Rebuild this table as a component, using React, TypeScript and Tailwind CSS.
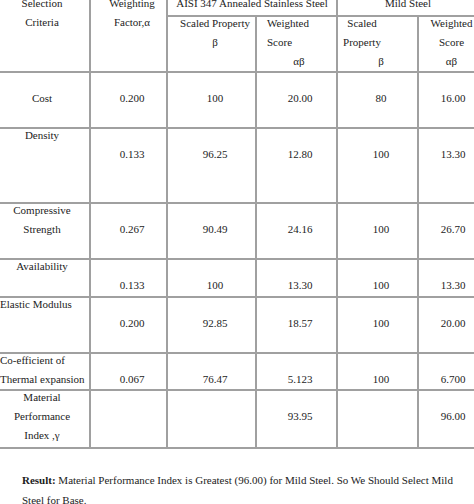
import React from "react";

const line = "border-[#a0a0a0]";

type Row = {
  label: string[];
  labelClass?: string;
  values: string[];
};

const rows: Row[] = [
  { label: ["", "Cost"], values: ["0.200", "100", "20.00", "80", "16.00"] },
  { label: ["Density"], values: ["0.133", "96.25", "12.80", "100", "13.30"] },
  { label: ["Compressive", "Strength"], values: ["0.267", "90.49", "24.16", "100", "26.70"] },
  { label: ["Availability"], values: ["0.133", "100", "13.30", "100", "13.30"] },
  { label: ["Elastic Modulus"], labelClass: "text-left pl-[12px]", values: ["0.200", "92.85", "18.57", "100", "20.00"] },
  {
    label: ["Co-efficient of", "Thermal expansion"],
    labelClass: "text-left pl-[12px] whitespace-nowrap",
    values: ["0.067", "76.47", "5.123", "100", "6.700"],
  },
  { label: ["Material", "Performance", "Index ,γ"], values: ["", "", "93.95", "", "96.00"] },
];

function Lines({ items, className = "" }: { items: string[]; className?: string }) {
  return (
    <div className={`-mt-[3px] ${className}`}>
      {items.map((t, i) => (
        <div key={i} className="h-[19px]">
          {t}
        </div>
      ))}
    </div>
  );
}

export default function App() {
  return (
    <div
      className="w-[474px] h-[504px] overflow-hidden bg-white text-[#1c1c1c] text-[11px] leading-[19px]"
      style={{ fontFamily: '"Liberation Serif", "Times New Roman", serif' }}
    >
      <div className="-mt-[6px] -ml-[12px] grid grid-cols-[103px_77px_89px_81px_81px_63px] grid-rows-[23px_56px_56px_75px_56px_38px_56px_37px_58px]">
        {/* header */}
        <div className={`row-span-2 border-r-2 border-b-2 ${line} text-center pl-[7px]`}>
          <div>Selection</div>
          <div>Criteria</div>
        </div>
        <div className={`row-span-2 border-r-2 border-b-2 ${line} text-center pl-[7px]`}>
          <div>Weighting</div>
          <div>Factor,α</div>
        </div>
        <div className={`col-span-2 border-r-2 border-b-2 ${line} text-center whitespace-nowrap`}>
          AISI 347 Annealed Stainless Steel
        </div>
        <div className={`col-span-2 border-b-2 ${line} text-center pr-[4px]`}>Mild Steel</div>

        <div className={`border-r-2 border-b-2 ${line}`}>
          <Lines items={["Scaled Property", "β"]} className="text-center pl-[7px] whitespace-nowrap" />
        </div>
        <div className={`border-r-2 border-b-2 ${line}`}>
          <div className="-mt-[3px]">
            <div className="h-[19px] pl-[10px]">Weighted</div>
            <div className="h-[19px] pl-[10px]">Score</div>
            <div className="h-[19px] text-center pl-[5px]">αβ</div>
          </div>
        </div>
        <div className={`border-r-2 border-b-2 ${line}`}>
          <div className="-mt-[3px]">
            <div className="h-[19px] text-center pr-[31px]">Scaled</div>
            <div className="h-[19px] text-center pr-[31px]">Property</div>
            <div className="h-[19px] text-center pl-[7px]">β</div>
          </div>
        </div>
        <div className={`border-r-2 border-b-2 ${line}`}>
          <Lines items={["Weighted", "Score", "αβ"]} className="text-center pl-[4px] whitespace-nowrap" />
        </div>

        {/* body */}
        {rows.map((r, i) => (
          <React.Fragment key={i}>
            <div className={`border-r-2 border-b-2 ${line}`}>
              <Lines items={r.label} className={r.labelClass ?? "text-center pl-[7px]"} />
            </div>
            {r.values.map((v, j) => (
              <div key={j} className={`border-r-2 border-b-2 ${line} text-center pl-[7px] pt-[16px]`}>
                {v}
              </div>
            ))}
          </React.Fragment>
        ))}
      </div>

      <p className="mt-[21px] ml-[22px] w-[440px] leading-[20px]">
        <b>Result:</b> Material Performance Index is Greatest (96.00) for Mild Steel. So We Should Select Mild Steel
        for Base.
      </p>
    </div>
  );
}
